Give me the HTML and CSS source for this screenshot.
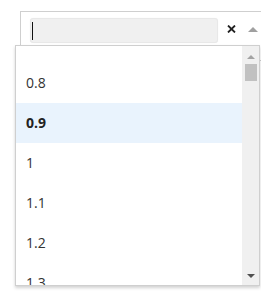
FILE: index.html
```html
<!DOCTYPE html>
<html>
<head>
<meta charset="utf-8">
<link rel="stylesheet" href="styles.css">
</head>
<body>
<div class="select">
  <div class="search"><span class="caret"></span></div>
  <span class="clear">
    <svg width="9" height="8" viewBox="0 0 9 8"><path d="M1 0.5 L8 7.5 M8 0.5 L1 7.5" stroke="#222" stroke-width="1.8" fill="none"/></svg>
  </span>
  <span class="toggle">
    <svg width="10" height="5" viewBox="0 0 10 5"><path d="M0 5 L5 0 L10 5 Z" fill="#a0a0a0"/></svg>
  </span>
</div>
<div class="panel">
  <ul class="list">
    <li class="item">0.8</li>
    <li class="item active">0.9</li>
    <li class="item">1</li>
    <li class="item">1.1</li>
    <li class="item">1.2</li>
    <li class="item">1.3</li>
  </ul>
  <div class="scrollbar">
    <svg class="sb-up" width="8" height="4" viewBox="0 0 8 4"><path d="M0 4 L4 0 L8 4 Z" fill="#a3a3a3"/></svg>
    <div class="thumb"></div>
    <div class="sb-space"></div>
    <svg class="sb-down" width="8" height="4" viewBox="0 0 8 4"><path d="M0 0 L8 0 L4 4 Z" fill="#505050"/></svg>
  </div>
</div>
</body>
</html>
```
FILE: styles.css
```css
html, body {
  margin: 0;
  padding: 0;
  background: #fff;
  font-family: "Open Sans", "Noto Sans", sans-serif;
  width: 261px;
  height: 294px;
  overflow: hidden;
}
.select {
  margin: 11px 0 0 20px;
  width: 241px;
  height: 50px;
  box-sizing: border-box;
  border: 1px solid #cfcfcf;
  border-right: none;
  padding: 6px 0 0 9px;
  display: flex;
  align-items: flex-start;
}
.search {
  width: 188px;
  height: 25px;
  box-sizing: border-box;
  background: #f0f0f0;
  border: 1px solid #e8e8e8;
  border-radius: 3px;
  box-shadow: 0 0 1px rgba(0,0,0,0.08);
  padding: 3px 0 0 1px;
}
.caret {
  display: block;
  width: 1px;
  height: 18px;
  background: #111;
}
.clear {
  display: flex;
  margin: 7px 0 0 9px;
}
.toggle {
  display: flex;
  margin: 9px 0 0 12px;
}
.panel {
  position: absolute;
  left: 15px;
  top: 45px;
  width: 245px;
  height: 241px;
  box-sizing: border-box;
  border: 1px solid #cfcfcf;
  background: #fff;
  box-shadow: 0 2px 3px rgba(0,0,0,0.18);
  display: flex;
  overflow: hidden;
}
.list {
  list-style: none;
  margin: 0;
  padding: 17px 0 0 0;
  flex: 1;
}
.item {
  height: 40px;
  line-height: 40px;
  padding-left: 10px;
  font-size: 14px;
  color: #333;
}
.item.active {
  background: #e9f3fd;
  font-weight: bold;
  color: #222;
}
.scrollbar {
  width: 17px;
  background: #f0f0f0;
  display: flex;
  flex-direction: column;
  align-items: center;
}
.sb-up {
  margin-top: 9px;
}
.thumb {
  width: 12px;
  height: 17px;
  margin-top: 5px;
  background: #c1c1c1;
}
.sb-space {
  flex: 1;
}
.sb-down {
  margin-bottom: 7px;
}
```
